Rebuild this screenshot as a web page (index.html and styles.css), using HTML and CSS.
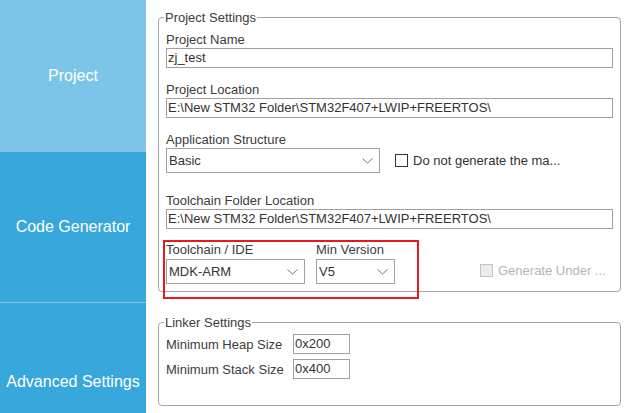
FILE: index.html
```html
<!DOCTYPE html>
<html lang="en">
<head>
    <meta charset="UTF-8">
    <title>Project Manager</title>
    <link rel="stylesheet" href="styles.css">
</head>
<body>
    <div class="app">
        <!-- Sidebar tabs -->
        <div class="sidebar">
            <div class="tab tab-project">Project</div>
            <div class="tab tab-code">Code Generator</div>
            <div class="tab tab-advanced">Advanced Settings</div>
        </div>

        <div class="main">
            <fieldset class="group group-project">
                <legend>Project Settings</legend>

                <div class="field">
                    <label>Project Name</label>
                    <div class="textbox">zj_test</div>
                </div>

                <div class="field">
                    <label>Project Location</label>
                    <div class="textbox">E:\New STM32 Folder\STM32F407+LWIP+FREERTOS\</div>
                </div>

                <div class="field field-app">
                    <label>Application Structure</label>
                    <div class="row">
                        <div class="combo combo-app">
                            <span>Basic</span>
                            <svg class="chevron" width="11" height="6" viewBox="0 0 11 6"><polyline points="0.5,0.5 5.5,5 10.5,0.5" fill="none" stroke="#777" stroke-width="1"/></svg>
                        </div>
                        <div class="check">
                            <span class="box"></span>
                            <span>Do not generate the ma...</span>
                        </div>
                    </div>
                </div>

                <div class="field field-folder">
                    <label>Toolchain Folder Location</label>
                    <div class="textbox">E:\New STM32 Folder\STM32F407+LWIP+FREERTOS\</div>
                </div>

                <div class="row row-toolchain">
                    <div class="field">
                        <label>Toolchain / IDE</label>
                        <div class="combo combo-ide">
                            <span>MDK-ARM</span>
                            <svg class="chevron" width="11" height="6" viewBox="0 0 11 6"><polyline points="0.5,0.5 5.5,5 10.5,0.5" fill="none" stroke="#777" stroke-width="1"/></svg>
                        </div>
                    </div>
                    <div class="field">
                        <label>Min Version</label>
                        <div class="combo combo-ver">
                            <span>V5</span>
                            <svg class="chevron" width="11" height="6" viewBox="0 0 11 6"><polyline points="0.5,0.5 5.5,5 10.5,0.5" fill="none" stroke="#777" stroke-width="1"/></svg>
                        </div>
                    </div>
                    <div class="check check-disabled">
                        <span class="box"></span>
                        <span>Generate Under ...</span>
                    </div>
                </div>

                <!-- red highlight drawn over the toolchain fields -->
                <div class="highlight"></div>
            </fieldset>

            <fieldset class="group group-linker">
                <legend>Linker Settings</legend>
                <div class="pair">
                    <label>Minimum Heap Size</label>
                    <div class="textbox small">0x200</div>
                </div>
                <div class="pair">
                    <label>Minimum Stack Size</label>
                    <div class="textbox small">0x400</div>
                </div>
            </fieldset>
        </div>
    </div>
</body>
</html>
```

FILE: styles.css
```css
body {
    margin: 0;
    padding: 0;
    background-color: #fff;
    font-family: "Liberation Sans", Arial, sans-serif;
    font-size: 13px;
    color: #3c3c3c;
}

.app {
    display: flex;
    width: 627px;
    height: 413px;
    overflow: hidden;
}

/* Barra laterale */
.sidebar {
    width: 146px;
    flex-shrink: 0;
    background-color: #38a7db;
    overflow: hidden;
}

.tab {
    display: flex;
    align-items: center;
    justify-content: center;
    color: #fff;
    font-size: 16px;
    height: 150px;
}

.tab-project {
    height: 152px;
    background-color: #7dc5e8;
}

.tab-code {
    border-bottom: 1px solid #7cc3e6;
}

.tab-advanced {
    padding-top: 4px;
}

/* Area principale */
.main {
    flex: 1;
    padding: 10px 6px 0 12px;
}

.group {
    position: relative;
    box-sizing: border-box;
    margin: 0;
    padding: 0 7px 0 7px;
    border: 1px solid #a2a6aa;
    border-radius: 4px;
}

.group legend {
    padding: 0 1px;
    margin-left: -2px;
    line-height: 15px;
    color: #3c3c3c;
}

.group-project {
    height: 282px;
}

.group-linker {
    margin-top: 23px;
    height: 91px;
}

.field label {
    display: block;
    line-height: 17px;
}

.group-project > .field:first-of-type {
    margin-top: 6px;
}

.field {
    margin-bottom: 13px;
}

.field-app {
    margin-bottom: 19px;
}

.field-folder {
    margin-bottom: 12px;
}

.textbox {
    height: 18px;
    line-height: 18px;
    border: 1px solid #a0a0a0;
    padding: 0 1px;
    color: #333;
    white-space: nowrap;
    overflow: hidden;
}

.row {
    display: flex;
    align-items: center;
}

.combo {
    display: flex;
    align-items: center;
    justify-content: space-between;
    height: 23px;
    border: 1px solid #a0a0a0;
    padding: 0 6px 0 2px;
    color: #333;
    box-sizing: content-box;
}

.combo-app {
    width: 204px;
}

.combo-ide {
    width: 129px;
}

.combo-ver {
    width: 69px;
}

.chevron {
    display: block;
}

.check {
    display: flex;
    align-items: center;
    margin-left: 15px;
    color: #333;
}

.check .box {
    width: 11px;
    height: 11px;
    border: 1px solid #333;
    background-color: #fff;
    margin-right: 5px;
}

.check-disabled {
    color: #b4b4b4;
    margin-left: 85px;
    margin-top: 22px;
}

.check-disabled .box {
    border-color: #c4c4c4;
    background-color: #ececec;
}

.row-toolchain {
    align-items: flex-start;
}

.row-toolchain .field {
    margin-bottom: 0;
    margin-right: 11px;
}

.row-toolchain .field label {
    margin-bottom: 1px;
}

.row-toolchain .field + .field {
    margin-right: 0;
}

.highlight {
    position: absolute;
    left: 4px;
    top: 215px;
    width: 252px;
    height: 55px;
    border: 2px solid #e41a22;
}

/* Linker */
.pair {
    display: flex;
    align-items: center;
    margin-bottom: 5px;
}

.group-linker .pair:first-of-type {
    margin-top: 4px;
}

.pair label {
    width: 127px;
}

.textbox.small {
    width: 53px;
}
```
